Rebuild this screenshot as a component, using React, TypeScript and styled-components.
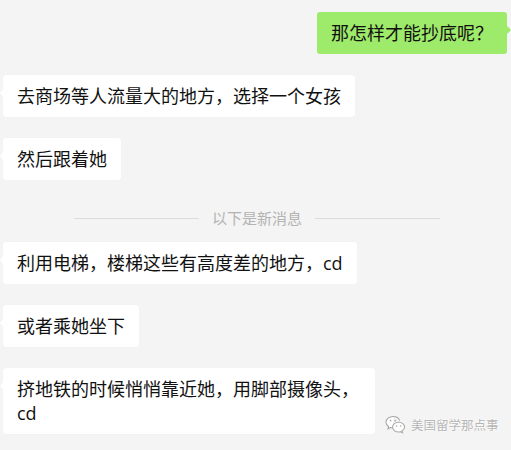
import styled, { createGlobalStyle } from "styled-components";

const GlobalStyle = createGlobalStyle`
  html, body {
    margin: 0;
    padding: 0;
    background: #f4f4f4;
  }
  body {
    font-family: "Open Sans", "Noto Sans CJK SC", sans-serif;
  }
`;

type Msg =
  | { kind: "me" | "them"; text: string }
  | { kind: "divider"; text: string };

const messages: Msg[] = [
  { kind: "me", text: "那怎样才能抄底呢？" },
  { kind: "them", text: "去商场等人流量大的地方，选择一个女孩" },
  { kind: "them", text: "然后跟着她" },
  { kind: "divider", text: "以下是新消息" },
  { kind: "them", text: "利用电梯，楼梯这些有高度差的地方，cd" },
  { kind: "them", text: "或者乘她坐下" },
  { kind: "them", text: "挤地铁的时候悄悄靠近她，用脚部摄像头，cd" },
];

export default function App() {
  return (
    <>
      <GlobalStyle />
      <Chat>
        {messages.map((m, i) =>
          m.kind === "divider" ? (
            <Divider key={i}>
              <Line />
              <DividerText>{m.text}</DividerText>
              <Line />
            </Divider>
          ) : (
            <Row key={i} $mine={m.kind === "me"}>
              <Bubble $mine={m.kind === "me"}>{m.text}</Bubble>
            </Row>
          )
        )}
        <Watermark>
          <WeChatIcon />
          <span>美国留学那点事</span>
        </Watermark>
      </Chat>
    </>
  );
}

const WeChatIcon = () => (
  <svg width="21" height="19" viewBox="0 0 21 19">
    <g fill="#fff" stroke="#a8a8a8" strokeWidth="1.1">
      <path d="M8 1.5c-3.9 0-7 2.6-7 5.8 0 1.8 1 3.4 2.6 4.5l-.6 2 2.3-1.2c.9.3 1.8.4 2.7.4" />
      <path d="M13.6 7.2c-3.3 0-6 2.2-6 4.9s2.7 4.9 6 4.9c.7 0 1.4-.1 2-.3l1.9 1-.5-1.7c1.6-.9 2.6-2.3 2.6-3.9 0-2.7-2.7-4.9-6-4.9z" />
      <path d="M14.6 5.6C13.9 3.2 11.2 1.5 8 1.5" fill="none" />
    </g>
    <g fill="#a8a8a8">
      <circle cx="5.6" cy="5.6" r="0.9" />
      <circle cx="10.2" cy="5.6" r="0.9" />
      <circle cx="11.6" cy="11" r="0.8" />
      <circle cx="15.6" cy="11" r="0.8" />
    </g>
  </svg>
);

const Chat = styled.div`
  position: relative;
  width: 511px;
  height: 450px;
  box-sizing: border-box;
  padding: 12px 4px 0 3px;
  display: flex;
  flex-direction: column;
  gap: 21px;
  overflow: hidden;
`;

const Row = styled.div<{ $mine: boolean }>`
  display: flex;
  justify-content: ${(p) => (p.$mine ? "flex-end" : "flex-start")};
`;

const Bubble = styled.div<{ $mine: boolean }>`
  position: relative;
  max-width: 372px;
  box-sizing: border-box;
  padding: 9px 14px;
  border-radius: 3px;
  font-size: 18px;
  line-height: 24px;
  color: #111111;
  background: ${(p) => (p.$mine ? "#9eea6a" : "#ffffff")};
  box-shadow: ${(p) => (p.$mine ? "none" : "0 0 1px rgba(0, 0, 0, 0.06)")};

  &::before {
    content: "";
    position: absolute;
    top: 14px;
    ${(p) => (p.$mine ? "right: -4px;" : "left: -3px;")}
    border-top: 4px solid transparent;
    border-bottom: 4px solid transparent;
    ${(p) =>
      p.$mine
        ? "border-left: 4px solid #9eea6a;"
        : "border-right: 3px solid #ffffff;"}
  }
`;

const Divider = styled.div`
  display: flex;
  align-items: center;
  justify-content: center;
  gap: 13px;
  height: 20px;
  margin: 7px 0 -7px;
  padding-left: 4px;
`;

const Line = styled.div`
  width: 125px;
  height: 1px;
  background: #dcdcdc;
`;

const DividerText = styled.span`
  font-size: 15px;
  color: #b3b3b3;
  line-height: 20px;
`;

const Watermark = styled.div`
  position: absolute;
  left: 385px;
  top: 415px;
  display: flex;
  align-items: center;
  gap: 5px;
  font-size: 12.5px;
  color: #b5b5b5;
  text-shadow: 0 0 2px #fff, 0 0 1px #fff;
`;
